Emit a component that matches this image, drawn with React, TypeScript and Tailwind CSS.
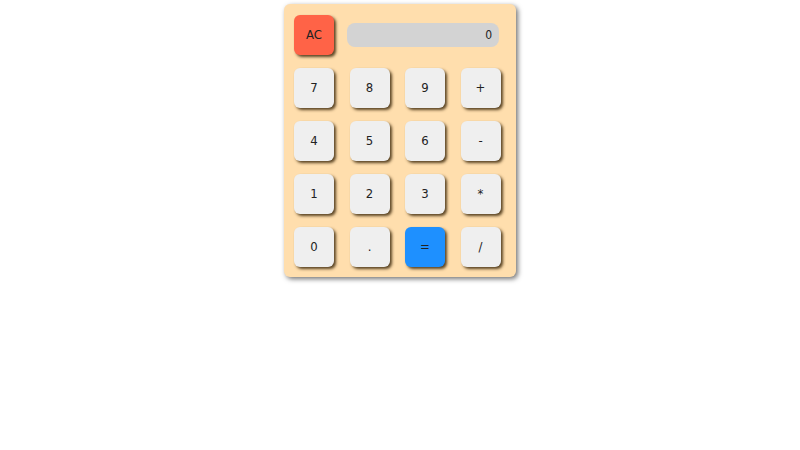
import React from "react";

const rows = [
  ["7", "8", "9", "+"],
  ["4", "5", "6", "-"],
  ["1", "2", "3", "*"],
  ["0", ".", "=", "/"],
];

export default function App() {
  return (
    <div className="w-[800px] h-[450px] bg-white flex justify-center" style={{ fontFamily: '"Liberation Sans Narrow", "DejaVu Sans Condensed", "Roboto", sans-serif' }}>
      <div className="mt-[4px] w-[232px] h-[273px] bg-[#ffdead] rounded-[6px] shadow-[2px_2px_5px_rgba(0,0,0,0.55)] pl-[10px] pt-[11px] flex flex-col">
        <div className="flex items-center h-[40px]">
          <div className="w-[40px] h-[40px] rounded-[6px] bg-[#ff6347] shadow-[2px_2px_3px_rgba(60,40,10,0.85)] flex items-center justify-center text-[13px] text-[#222]">AC</div>
          <div className="ml-[13px] w-[152px] h-[24px] rounded-[8px] bg-[#d3d3d3] flex items-center justify-end pr-[7px] text-[12px] text-[#222]">0</div>
        </div>
        <div className="mt-[13px] grid grid-cols-[40px_40px_40px_40px] gap-x-[15.5px] gap-y-[13px]">
          {rows.flat().map((k) => (
            <div
              key={k}
              className={`w-[40px] h-[40px] rounded-[6px] shadow-[2px_2px_3px_rgba(60,40,10,0.85)] flex items-center justify-center text-[13px] text-[#222] ${k === "=" ? "bg-[#1e90ff]" : "bg-[#efefef]"}`}
            >
              {k}
            </div>
          ))}
        </div>
      </div>
    </div>
  );
}
